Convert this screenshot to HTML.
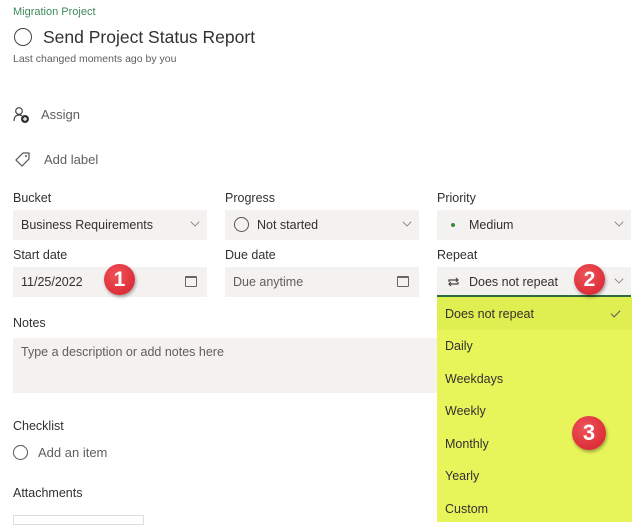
<!DOCTYPE html>
<html><head><style>
*{margin:0;padding:0;box-sizing:border-box}
body{width:634px;height:522px;background:#fff;font-family:"Liberation Sans",sans-serif;position:relative;overflow:hidden;color:#323130}
.a{position:absolute;white-space:nowrap}
.lbl{font-size:12.5px;color:#323130}
.box{position:absolute;background:#f3f2f1;height:30px;font-size:12.5px;color:#323130;line-height:30px;padding-left:8px}
.chev{position:absolute;right:8px;top:8px;width:8px;height:8px;border-right:1px solid #777;border-bottom:1px solid #777;transform:rotate(45deg) scale(.8)}
.badge{position:absolute;border-radius:50%;background:radial-gradient(circle at 40% 35%,#f0535a,#d41f2a);color:#fff;font-weight:bold;text-align:center;box-shadow:1px 2px 3px rgba(0,0,0,.35)}
.dd{position:absolute;left:437px;top:297px;width:195px;height:225px;background:#e8f55a}
.it{position:absolute;left:8px;font-size:12.5px;color:#323130}
</style></head><body>
<div class="a" style="left:13px;top:6px;font-size:11px;color:#3c8a5a">Migration Project</div>
<div class="a" style="left:14px;top:28px;width:18px;height:18px;border:1.5px solid #444;border-radius:50%"></div>
<div class="a" style="left:43px;top:27px;font-size:17.5px;color:#323130">Send Project Status Report</div>
<div class="a" style="left:13px;top:53px;font-size:10.5px;color:#605e5c">Last changed moments ago by you</div>
<svg class="a" style="left:13px;top:106px" width="18" height="18" viewBox="0 0 18 18"><circle cx="6" cy="5" r="3.3" fill="none" stroke="#444" stroke-width="1.2"/><path d="M1 15c0-4 2-6 5-6 1.5 0 2.5.4 3 1" fill="none" stroke="#444" stroke-width="1.2"/><circle cx="12" cy="13" r="4" fill="#333"/><path d="M12 11v4M10 13h4" stroke="#fff" stroke-width="1.2"/></svg>
<div class="a" style="left:41px;top:107px;font-size:13px;color:#605e5c">Assign</div>
<svg class="a" style="left:14px;top:151px" width="18" height="18" viewBox="0 0 18 18"><path d="M9 2h6v6l-7 7-6-6z" fill="none" stroke="#555" stroke-width="1.2"/><circle cx="12" cy="5" r="1" fill="#555"/></svg>
<div class="a" style="left:44px;top:152px;font-size:13px;color:#605e5c">Add label</div>

<div class="a lbl" style="left:13px;top:191px">Bucket</div>
<div class="a lbl" style="left:225px;top:191px">Progress</div>
<div class="a lbl" style="left:437px;top:191px">Priority</div>
<div class="box" style="left:13px;top:210px;width:194px">Business Requirements<div class="chev"></div></div>
<div class="box" style="left:225px;top:210px;width:194px;padding-left:32px"><div class="a" style="left:9px;top:7px;width:15px;height:15px;border:1.3px solid #555;border-radius:50%"></div>Not started<div class="chev"></div></div>
<div class="box" style="left:437px;top:210px;width:194px;padding-left:32px"><div class="a" style="left:14px;top:13px;width:4px;height:4px;border-radius:50%;background:#3a8a3a"></div>Medium<div class="chev"></div></div>

<div class="a lbl" style="left:13px;top:248px">Start date</div>
<div class="a lbl" style="left:225px;top:248px">Due date</div>
<div class="a lbl" style="left:437px;top:248px">Repeat</div>
<div class="box" style="left:13px;top:267px;width:194px">11/25/2022<div class="a" style="right:10px;top:9px;width:12px;height:11px;border:1.2px solid #666;border-top-width:2.5px;border-radius:1px"></div></div>
<div class="box" style="left:225px;top:267px;width:194px;color:#605e5c">Due anytime<div class="a" style="right:10px;top:9px;width:12px;height:11px;border:1.2px solid #666;border-top-width:2.5px;border-radius:1px"></div></div>
<div class="box" style="left:437px;top:267px;width:194px;padding-left:32px;border-bottom:2px solid #2e6b3e">
<svg class="a" style="left:9px;top:8px" width="15" height="14" viewBox="0 0 15 14"><path d="M3 7V5h9M10 3l2 2-2 2M12 7v2H3M5 11l-2-2 2-2" fill="none" stroke="#444" stroke-width="1.2"/></svg>Does not repeat<div class="chev"></div></div>

<div class="a lbl" style="left:13px;top:316px">Notes</div>
<div class="box" style="left:13px;top:338px;width:440px;height:55px;line-height:28px;color:#605e5c;font-size:12.5px">Type a description or add notes here</div>

<div class="a lbl" style="left:13px;top:419px">Checklist</div>
<div class="a" style="left:13px;top:445px;width:15px;height:15px;border:1.3px solid #555;border-radius:50%"></div>
<div class="a" style="left:38px;top:445px;font-size:13px;color:#605e5c">Add an item</div>
<div class="a lbl" style="left:13px;top:486px">Attachments</div>
<div class="a" style="left:13px;top:515px;width:131px;height:10px;border:1px solid #ddd"></div>

<div class="dd">
<div class="a" style="left:0;top:0;width:195px;height:33px;background:#dfee50"></div>
<div class="it" style="top:10px">Does not repeat</div>
<div class="a" style="left:176px;top:11px;width:5px;height:9px;border-right:1px solid #555;border-bottom:1px solid #555;transform:rotate(45deg)"></div>
<div class="it" style="top:42px">Daily</div>
<div class="it" style="top:75px">Weekdays</div>
<div class="it" style="top:107px">Weekly</div>
<div class="it" style="top:140px">Monthly</div>
<div class="it" style="top:172px">Yearly</div>
<div class="it" style="top:205px">Custom</div>
</div>

<div class="badge" style="left:104px;top:264px;width:31px;height:31px;font-size:21px;line-height:31px">1</div>
<div class="badge" style="left:574px;top:264px;width:31px;height:31px;font-size:21px;line-height:31px">2</div>
<div class="badge" style="left:572px;top:416px;width:34px;height:34px;font-size:22px;line-height:34px">3</div>
</body></html>
